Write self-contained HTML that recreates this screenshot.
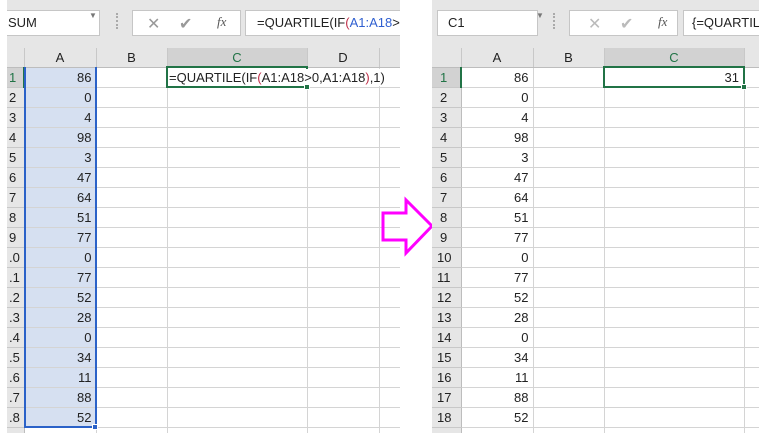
<!DOCTYPE html>
<html><head><meta charset="utf-8"><style>
*{margin:0;padding:0;box-sizing:border-box}
body{width:759px;height:433px;background:#fff;position:relative;overflow:hidden;font-family:"Liberation Sans",sans-serif;font-size:13px;color:#222}
.p{position:absolute;top:0;height:433px;overflow:hidden;background:#fff}
.top{position:absolute;left:0;top:0;right:0;height:48px;background:#e6e6e6}
.box{position:absolute;top:10px;height:26px;background:#fff;border:1px solid #c6c6c6;line-height:24px;padding-left:6px;white-space:nowrap;overflow:hidden;font-size:13px}
.dd{position:absolute;top:11px;font-size:8px;color:#777}
.dots{position:absolute;top:13px;width:2px;height:16px;border-left:2px dotted #aaa}
.ic{position:absolute;top:10px;color:#999;font-size:16px}
table{position:absolute;top:48px;left:0;border-collapse:collapse;table-layout:fixed}
td{height:20px;border-right:1px solid #d4d4d4;border-bottom:1px solid #d4d4d4;padding:0 4px;text-align:right;white-space:nowrap;overflow:visible}
tr.h td{height:19px;background:#e6e6e6;text-align:center;border-right:1px solid #c8c8c8;border-bottom:1px solid #bdbdbd;color:#222}
td.r{background:#e6e6e6;text-align:left;padding:0 0 0 2px;border-right:1px solid #bdbdbd;border-bottom:1px solid #c8c8c8}
.L td.a{background:#d6e0f1}
.blue{color:#2f5fd0}.red{color:#c0304a}
</style></head><body>

<div class="p" style="left:7px;width:393px">
 <div class="top"></div>
 <div class="box" style="left:-2px;width:95px;padding-left:2px">SUM</div>
 <div class="dd" style="left:82px">▼</div>
 <div class="dots" style="left:109px"></div>
 <div class="box" style="left:125px;width:109px"></div>
 <div class="ic" style="left:140px;top:14px">✕</div>
 <div class="ic" style="left:172px;top:14px">✔</div>
 <div class="ic" style="left:210px;top:14px;font-family:'Liberation Serif',serif;font-style:italic;font-size:13px;color:#555">fx</div>
 <div class="box" style="left:238px;width:170px;padding-left:11px">=QUARTILE(IF<span class="red">(</span><span class="blue">A1:A18</span>&gt;</div>
 <table class="L" style="width:402px">
  <colgroup><col style="width:17px"><col style="width:72px"><col style="width:71px"><col style="width:140px"><col style="width:72px"><col style="width:30px"></colgroup>
  <tr class="h"><td class="r" style="background:#e6e6e6"></td><td>A</td><td>B</td><td style="background:#d2d2d2;border-bottom:2px solid #217346;color:#217346">C</td><td>D</td><td></td></tr>
  <tr><td class="r" style="background:#d2d2d2;color:#217346;border-right:2px solid #217346">1</td><td class="a">86</td><td></td><td style="border:2px solid #217346"></td><td></td><td></td></tr>
  <tr><td class="r">2</td><td class="a">0</td><td></td><td></td><td></td><td></td></tr>
  <tr><td class="r">3</td><td class="a">4</td><td></td><td></td><td></td><td></td></tr>
  <tr><td class="r">4</td><td class="a">98</td><td></td><td></td><td></td><td></td></tr>
  <tr><td class="r">5</td><td class="a">3</td><td></td><td></td><td></td><td></td></tr>
  <tr><td class="r">6</td><td class="a">47</td><td></td><td></td><td></td><td></td></tr>
  <tr><td class="r">7</td><td class="a">64</td><td></td><td></td><td></td><td></td></tr>
  <tr><td class="r">8</td><td class="a">51</td><td></td><td></td><td></td><td></td></tr>
  <tr><td class="r">9</td><td class="a">77</td><td></td><td></td><td></td><td></td></tr>
  <tr><td class="r">.0</td><td class="a">0</td><td></td><td></td><td></td><td></td></tr>
  <tr><td class="r">.1</td><td class="a">77</td><td></td><td></td><td></td><td></td></tr>
  <tr><td class="r">.2</td><td class="a">52</td><td></td><td></td><td></td><td></td></tr>
  <tr><td class="r">.3</td><td class="a">28</td><td></td><td></td><td></td><td></td></tr>
  <tr><td class="r">.4</td><td class="a">0</td><td></td><td></td><td></td><td></td></tr>
  <tr><td class="r">.5</td><td class="a">34</td><td></td><td></td><td></td><td></td></tr>
  <tr><td class="r">.6</td><td class="a">11</td><td></td><td></td><td></td><td></td></tr>
  <tr><td class="r">.7</td><td class="a">88</td><td></td><td></td><td></td><td></td></tr>
  <tr><td class="r">.8</td><td class="a">52</td><td></td><td></td><td></td><td></td></tr>
  <tr><td class="r"></td><td></td><td></td><td></td><td></td><td></td></tr>
 </table>
 <div style="position:absolute;left:162px;top:69px;height:17px;line-height:17px;background:#fff;padding:0 2px 0 0;white-space:nowrap">=QUARTILE(IF<span class="red">(</span>A1:A18&gt;0,A1:A18<span class="red">)</span>,1)</div>
 <div style="position:absolute;left:17px;top:67px;width:73px;height:361px;border:2px solid #2b62c8;border-top:0"></div>
 <div style="position:absolute;left:85px;top:424px;width:6px;height:6px;background:#2b62c8;border:1px solid #fff"></div>
 <div style="position:absolute;left:297px;top:84px;width:6px;height:6px;background:#217346;border:1px solid #fff"></div>
</div>

<svg style="position:absolute;left:380px;top:196px" width="56" height="62"><path d="M3 17 H26 V4 L52 30 L26 57 V44 H3 Z" fill="none" stroke="#ff00ff" stroke-width="3" stroke-linejoin="miter"/></svg>

<div class="p" style="left:432px;width:327px">
 <div class="top"></div>
 <div class="box" style="left:5px;width:101px;padding-left:10px">C1</div>
 <div class="dd" style="left:104px">▼</div>
 <div class="dots" style="left:121px"></div>
 <div class="box" style="left:137px;width:109px"></div>
 <div class="ic" style="left:156px;top:14px;color:#bbb">✕</div>
 <div class="ic" style="left:188px;top:14px;color:#bbb">✔</div>
 <div class="ic" style="left:226px;top:14px;font-family:'Liberation Serif',serif;font-style:italic;font-size:13px;color:#555">fx</div>
 <div class="box" style="left:251px;width:90px;padding-left:8px">{=QUARTILE</div>
 <table style="width:342px">
  <colgroup><col style="width:29px"><col style="width:72px"><col style="width:71px"><col style="width:140px"><col style="width:30px"></colgroup>
  <tr class="h"><td class="r" style="background:#e6e6e6"></td><td>A</td><td>B</td><td style="background:#d2d2d2;border-bottom:2px solid #217346;color:#217346">C</td><td></td></tr>
  <tr><td class="r" style="background:#d2d2d2;color:#217346;border-right:2px solid #217346;padding-left:8px">1</td><td>86</td><td></td><td style="border:2px solid #217346">31</td><td></td></tr>
  <tr><td class="r" style="padding-left:8px">2</td><td>0</td><td></td><td></td><td></td></tr>
  <tr><td class="r" style="padding-left:8px">3</td><td>4</td><td></td><td></td><td></td></tr>
  <tr><td class="r" style="padding-left:8px">4</td><td>98</td><td></td><td></td><td></td></tr>
  <tr><td class="r" style="padding-left:8px">5</td><td>3</td><td></td><td></td><td></td></tr>
  <tr><td class="r" style="padding-left:8px">6</td><td>47</td><td></td><td></td><td></td></tr>
  <tr><td class="r" style="padding-left:8px">7</td><td>64</td><td></td><td></td><td></td></tr>
  <tr><td class="r" style="padding-left:8px">8</td><td>51</td><td></td><td></td><td></td></tr>
  <tr><td class="r" style="padding-left:8px">9</td><td>77</td><td></td><td></td><td></td></tr>
  <tr><td class="r" style="padding-left:5px">10</td><td>0</td><td></td><td></td><td></td></tr>
  <tr><td class="r" style="padding-left:5px">11</td><td>77</td><td></td><td></td><td></td></tr>
  <tr><td class="r" style="padding-left:5px">12</td><td>52</td><td></td><td></td><td></td></tr>
  <tr><td class="r" style="padding-left:5px">13</td><td>28</td><td></td><td></td><td></td></tr>
  <tr><td class="r" style="padding-left:5px">14</td><td>0</td><td></td><td></td><td></td></tr>
  <tr><td class="r" style="padding-left:5px">15</td><td>34</td><td></td><td></td><td></td></tr>
  <tr><td class="r" style="padding-left:5px">16</td><td>11</td><td></td><td></td><td></td></tr>
  <tr><td class="r" style="padding-left:5px">17</td><td>88</td><td></td><td></td><td></td></tr>
  <tr><td class="r" style="padding-left:5px">18</td><td>52</td><td></td><td></td><td></td></tr>
  <tr><td class="r"></td><td></td><td></td><td></td><td></td></tr>
 </table>
 <div style="position:absolute;left:309px;top:84px;width:6px;height:6px;background:#217346;border:1px solid #fff"></div>
</div>
</body></html>
